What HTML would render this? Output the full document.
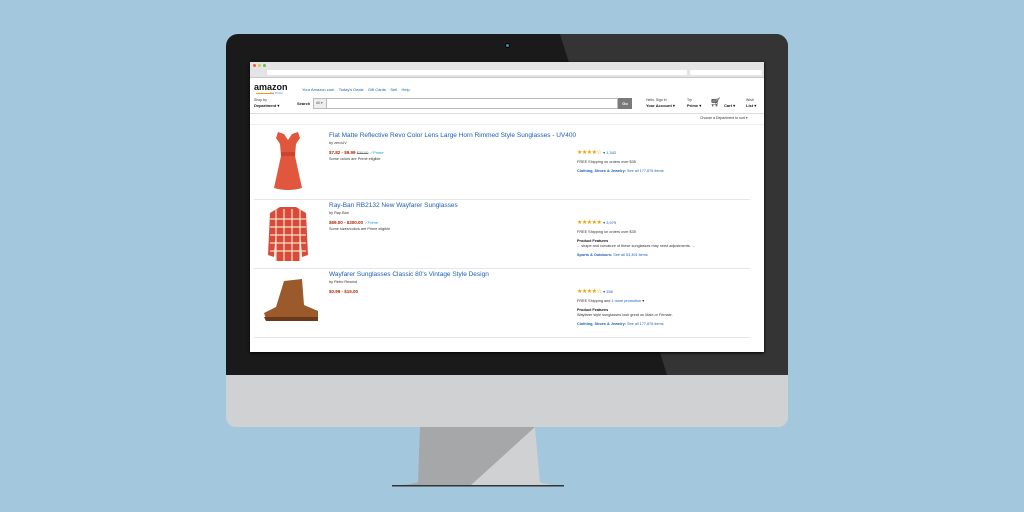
<!DOCTYPE html>
<html><head><meta charset="utf-8"><style>
*{margin:0;padding:0;box-sizing:border-box}
body{width:1024px;height:512px;background:#a3c8de;position:relative;overflow:hidden;font-family:"Liberation Sans",Arial,sans-serif}
.a{position:absolute}
.t{position:absolute;white-space:nowrap;line-height:1}
.b{color:#1a5fb4}
.r{color:#b12704;font-weight:bold}
.g{color:#333}
.star{color:#f0a000;letter-spacing:-0.5px}
</style></head><body>
<!-- stand -->
<svg class="a" style="left:380px;top:420px" width="200" height="70">
<path d="M40 7 L155 7 L160 62 Q162 64 184 66 L12 66 Q36 64 38 62 Z" fill="#a6a7a9"/>
<path d="M155 7 L160 62 Q162 64 184 66 L90 66 Z" fill="#d0d1d3"/>
<rect x="12" y="65" width="172" height="1.5" fill="#333"/>
</svg>
<!-- chin -->
<div class="a" style="left:226px;top:370px;width:562px;height:57px;background:#d0d1d3;border-radius:0 0 10px 10px"></div>
<!-- bezel -->
<div class="a" style="left:226px;top:34px;width:562px;height:341px;background:#1a1a1a;border-radius:12px 12px 0 0;overflow:hidden">
<svg class="a" style="left:0;top:0" width="562" height="341"><path d="M334 0 L562 0 L562 341 L441 341 Z" fill="#343434"/></svg>
<div class="a" style="left:279px;top:9px;width:5px;height:5px;border-radius:50%;background:#3d8fb0;border:1px solid #000"></div>
</div>
<!-- screen -->
<div class="a" style="left:250px;top:62px;width:514px;height:290px;background:#fff;overflow:hidden;box-shadow:0 1px 3px #000">
<div class="a" style="left:0;top:0;width:514px;height:16px;background:#e4e4e4;border-bottom:1px solid #c8c8c8"></div>
<div class="a" style="left:3px;top:2px;width:3px;height:3px;border-radius:50%;background:#f05a50"></div>
<div class="a" style="left:8px;top:2px;width:3px;height:3px;border-radius:50%;background:#f4be3b"></div>
<div class="a" style="left:13px;top:2px;width:3px;height:3px;border-radius:50%;background:#5ec34b"></div>
<div class="a" style="left:17px;top:8px;width:420px;height:5px;background:#fff;border-radius:1px"></div>
<div class="a" style="left:440px;top:8px;width:72px;height:5px;background:#fff;border-radius:1px"></div>
<div class="t" style="left:4px;top:21px;font-size:9px;font-weight:bold;color:#111">amazon</div>
<div class="t" style="left:20px;top:30px;font-size:3px;color:#1a8fd0">Try Prime</div>
<div class="a" style="left:6px;top:31px;width:18px;height:1px;background:#f39c12;border-radius:1px"></div>
<div class="t b" style="left:52px;top:26px;font-size:4px;color:#1a5fb4">Your Amazon.com &nbsp;&nbsp; Today's Deals &nbsp;&nbsp; Gift Cards &nbsp;&nbsp; Sell &nbsp;&nbsp; Help</div>
<div class="t g" style="left:4px;top:37px;font-size:3.5px">Shop by</div>
<div class="t" style="left:4px;top:42px;font-size:4px;font-weight:bold;color:#111">Department ▾</div>
<div class="t" style="left:47px;top:40px;font-size:4px;font-weight:bold;color:#111">Search</div>
<div class="a" style="left:63px;top:36px;width:305px;height:11px;border:1px solid #bbb;background:#fff"></div>
<div class="a" style="left:63px;top:36px;width:14px;height:11px;background:#eee;border:1px solid #bbb;font-size:3.5px;color:#555;line-height:9px;padding-left:2px">All ▾</div>
<div class="a" style="left:368px;top:36px;width:14px;height:11px;background:#7a7a7a;color:#fff;font-size:4px;font-weight:bold;text-align:center;line-height:11px">Go</div>
<div class="t g" style="left:396px;top:37px;font-size:3.5px">Hello. Sign in</div>
<div class="t" style="left:396px;top:42px;font-size:4px;font-weight:bold;color:#111">Your Account ▾</div>
<div class="t g" style="left:437px;top:37px;font-size:3.5px">Try</div>
<div class="t" style="left:437px;top:42px;font-size:4px;font-weight:bold;color:#111">Prime ▾</div>
<div class="t" style="left:460px;top:36px;font-size:9px;color:#111">🛒︎</div>
<div class="t" style="left:474px;top:42px;font-size:4px;font-weight:bold;color:#111">Cart ▾</div>
<div class="t g" style="left:496px;top:37px;font-size:3.5px">Wish</div>
<div class="t" style="left:496px;top:42px;font-size:4px;font-weight:bold;color:#111">List ▾</div>
<div class="a" style="left:0;top:51px;width:514px;height:1px;background:#ddd"></div>
<div class="t g" style="left:450px;top:55px;font-size:3.5px">Choose a Department to sort ▾</div>
<div class="a" style="left:0;top:62px;width:514px;height:1px;background:#eee"></div>
<!-- item 1 -->
<svg class="a" style="left:18px;top:68px" width="40" height="62"><path d="M10 2 L16 4 L20 10 L24 4 L30 2 L32 8 L28 14 L27 26 L34 58 Q20 62 6 58 L13 26 L12 14 L8 8 Z" fill="#e0573e"/><path d="M13 22 L27 22 L27 26 L13 26Z" fill="#c9452f"/></svg>
<div class="t b" style="left:79px;top:71px;font-size:6.5px">Flat Matte Reflective Revo Color Lens Large Horn Rimmed Style Sunglasses - UV400</div>
<div class="t g" style="left:79px;top:80px;font-size:3.8px">by zeroUV</div>
<div class="t" style="left:79px;top:89px;font-size:4.5px"><span class="r">$7.82 - $9.99</span> <span style="color:#777;text-decoration:line-through;font-size:3.8px">$30.00</span> <span style="color:#1a98d5;font-style:italic;font-size:4px">✓Prime</span></div>
<div class="t g" style="left:79px;top:96px;font-size:3.8px">Some colors are Prime eligible</div>
<div class="t" style="left:327px;top:88px;font-size:6px"><span class="star">★★★★☆</span> <span class="b" style="font-size:4px">▾ 1,342</span></div>
<div class="t g" style="left:327px;top:99px;font-size:3.8px">FREE Shipping on orders over $35</div>
<div class="t b" style="left:327px;top:108px;font-size:3.8px"><b>Clothing, Shoes &amp; Jewelry:</b> See all 177,876 items</div>
<div class="a" style="left:4px;top:137px;width:496px;height:1px;background:#e6e6e6"></div>
<!-- item 2 -->
<svg class="a" style="left:16px;top:143px" width="44" height="58"><path d="M14 2 L30 2 L40 8 L42 50 L36 52 L34 24 L34 56 L10 56 L10 24 L8 52 L2 50 L4 8 Z" fill="#d94a3a"/><g stroke="#efe3c8" stroke-width="1.2"><path d="M4 14H40M4 22H40M4 30H40M4 38H40M4 46H40M10 4V56M18 4V56M26 4V56M34 4V56"/></g></svg>
<div class="t b" style="left:79px;top:141px;font-size:6.5px">Ray-Ban RB2132 New Wayfarer Sunglasses</div>
<div class="t g" style="left:79px;top:150px;font-size:3.8px">by Ray-Ban</div>
<div class="t" style="left:79px;top:159px;font-size:4.5px"><span class="r">$69.00 - $300.00</span> <span style="color:#1a98d5;font-style:italic;font-size:4px">✓Prime</span></div>
<div class="t g" style="left:79px;top:166px;font-size:3.8px">Some sizes/colors are Prime eligible</div>
<div class="t" style="left:327px;top:158px;font-size:6px"><span class="star">★★★★★</span> <span class="b" style="font-size:4px">▾ 3,979</span></div>
<div class="t g" style="left:327px;top:169px;font-size:3.8px">FREE Shipping on orders over $35</div>
<div class="t" style="left:327px;top:178px;font-size:3.8px;font-weight:bold;color:#111">Product Features</div>
<div class="t g" style="left:327px;top:183px;font-size:3.8px">... shape and curvature of these sunglasses may need adjustments. ...</div>
<div class="t b" style="left:327px;top:192px;font-size:3.8px"><b>Sports &amp; Outdoors:</b> See all 53,391 items</div>
<div class="a" style="left:4px;top:206px;width:496px;height:1px;background:#e6e6e6"></div>
<!-- item 3 -->
<svg class="a" style="left:12px;top:215px" width="58" height="50"><path d="M22 4 L40 2 L42 28 L56 34 L56 42 L4 42 L2 36 L14 30 Z" fill="#9a5a2c"/><path d="M2 40 L56 40 L56 44 L4 44Z" fill="#6b3a1a"/></svg>
<div class="t b" style="left:79px;top:210px;font-size:6.5px">Wayfarer Sunglasses Classic 80's Vintage Style Design</div>
<div class="t g" style="left:79px;top:219px;font-size:3.8px">by Retro Rewind</div>
<div class="t r" style="left:79px;top:228px;font-size:4.5px">$0.99 - $15.00</div>
<div class="t" style="left:327px;top:227px;font-size:6px"><span class="star">★★★★☆</span> <span class="b" style="font-size:4px">▾ 156</span></div>
<div class="t g" style="left:327px;top:238px;font-size:3.8px">FREE Shipping and <span class="b">1 more promotion</span> ▾</div>
<div class="t" style="left:327px;top:247px;font-size:3.8px;font-weight:bold;color:#111">Product Features</div>
<div class="t g" style="left:327px;top:252px;font-size:3.8px">Wayfarer style sunglasses look great on Male or Female.</div>
<div class="t b" style="left:327px;top:261px;font-size:3.8px"><b>Clothing, Shoes &amp; Jewelry:</b> See all 177,876 items</div>
<div class="a" style="left:4px;top:275px;width:496px;height:1px;background:#e6e6e6"></div>
</div>
</body></html>
